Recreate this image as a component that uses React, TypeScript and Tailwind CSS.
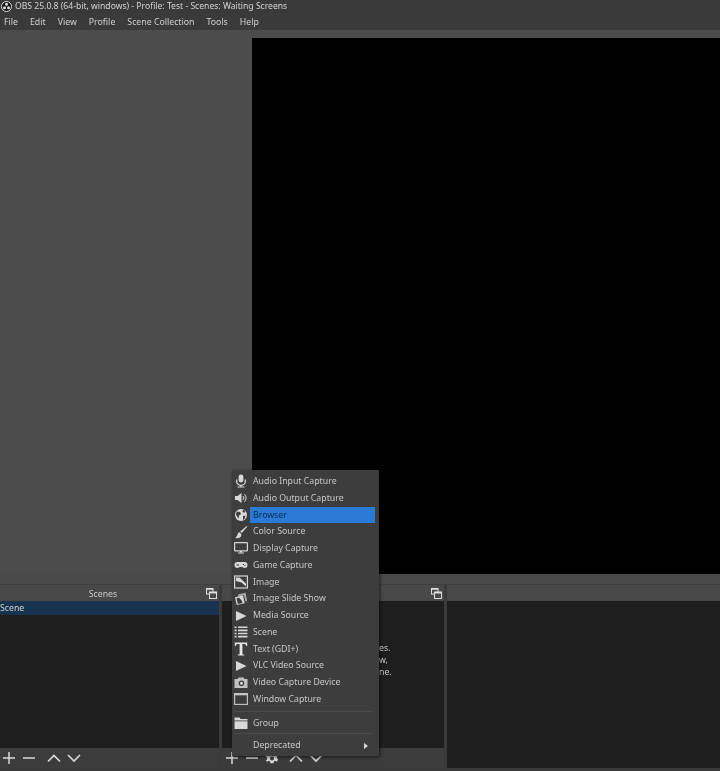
import type { ReactNode } from "react";

const font = "font-['Noto_Sans','Open_Sans',sans-serif]";

function Svg({ children }: { children: ReactNode }) {
  return (
    <svg width="14" height="14" viewBox="0 0 14 14" fill="#d8d8d8" stroke="none">
      {children}
    </svg>
  );
}

const MicIcon = () => (
  <Svg>
    <rect x="4.6" y="0.5" width="4.8" height="8" rx="2.4" />
    <path d="M2.6 5.5v1.5a4.4 4.4 0 0 0 8.8 0V5.5" fill="none" stroke="#d8d8d8" strokeWidth="1.3" />
    <path d="M6.3 11h1.4v1.4H10.500v1.100h-7v-1.100h2.800z" />
  </Svg>
);
const SpeakerIcon = () => (
  <Svg>
    <path d="M1 5h2.5L7.5 2v10L3.5 9H1z" />
    <path d="M9 5a3 3 0 0 1 0 4M10.5 3.2a5.5 5.5 0 0 1 0 7.6" fill="none" stroke="#d8d8d8" strokeWidth="1" />
  </Svg>
);
const GlobeIcon = () => (
  <Svg>
    <circle cx="7" cy="7" r="6" />
    <path d="M3 3.5l3 .5 1 2-2 1.500-.5 3L3 8.500 2 6zM9 1.800l2.500 1.500-1 1.500L8.500 4zM9 8l2.500-.5-1 3.500-1.500 1z" fill="#3d3d3d" />
  </Svg>
);
const BrushIcon = () => (
  <Svg>
    <path d="M13 .8 6.200 6.400 7.800 8 13.400 1.400z" />
    <path d="M5.400 7.200C3.500 7.500 3.800 10 2.800 11.200c-.6.700-1.400 1-1.800 1 1.400 1.200 4.200 1.400 5.600-.2.900-1 .9-2.800.3-3.400z" />
  </Svg>
);
const MonitorIcon = () => (
  <Svg>
    <rect x="0.6" y="1.6" width="12.8" height="8.3" rx="0.6" fill="none" stroke="#d8d8d8" strokeWidth="1.2" />
    <path d="M4 11.500h6v1H4z" />
    <path d="M6 10h2v1.500H6z" />
  </Svg>
);
const GamepadIcon = () => (
  <Svg>
    <path d="M3.500 4h7A3 3 0 0 1 13.500 7a3 3 0 0 1-3 3c-1.200 0-1.600-1-2.400-1H5.900c-.8 0-1.200 1-2.400 1a3 3 0 0 1-3-3 3 3 0 0 1 3-3z" />
    <path d="M2.500 6.500h2.500v1H2.500zM9 6h1v1H9zM10.500 7h1v1h-1z" fill="#3d3d3d" />
  </Svg>
);
const ImageIcon = () => (
  <Svg>
    <rect x="0.6" y="1" width="12.8" height="12" fill="none" stroke="#d8d8d8" strokeWidth="1.2" />
    <path d="M2 2.500h3.500l6.500 6v3L7.500 7.500 2 6z" />
  </Svg>
);
const SlidesIcon = () => (
  <Svg>
    <path d="M4 2.500 11.500.8l1.700 8.200-1.700.4L10 3.200 4.200 4.400z" opacity="0.7" />
    <path d="M1 5.200l8-1.600 1.700 7.600-8 1.800z" />
    <path d="M2.500 6.300l2.800-.5L8 9l.4 2-4.500 1z" fill="#3d3d3d" />
  </Svg>
);
const PlayIcon = () => (
  <Svg>
    <path d="M2 2l10.500 5L2 12z" />
  </Svg>
);
const ListIcon = () => (
  <Svg>
    <path d="M0.5 1.500h2v1.600h-2zM4 1.500h9.500v1.600H4zM0.5 4.600h2v1.600h-2zM4 4.600h9.500v1.600H4zM0.5 7.700h2v1.600h-2zM4 7.700h9.500v1.600H4zM0.5 10.800h2v1.600h-2zM4 10.800h9.500v1.600H4z" />
  </Svg>
);
const TextIcon = () => (
  <svg width="14" height="14" viewBox="0 0 14 14" fill="#e4e4e4">
    <path d="M0.8 0.5h12.400v3.400h-1C12 2.500 11.300 2 9.700 2H8.400v9.800c0 .6.500.8 1.700.8v1H3.900v-1c1.200 0 1.700-.2 1.700-.8V2H4.300C2.700 2 2 2.500 1.800 3.900h-1z" />
  </svg>
);
const CameraIcon = () => (
  <Svg>
    <path d="M0.5 3h3l1-1.500h5l1 1.500h3v9h-13z" opacity="0.85" />
    <circle cx="7.500" cy="7.200" r="2.800" fill="#3d3d3d" />
    <circle cx="7.500" cy="7.200" r="1.500" />
  </Svg>
);
const WindowIcon = () => (
  <Svg>
    <rect x="0.6" y="1.600" width="12.800" height="10.800" fill="none" stroke="#c8c8c8" strokeWidth="1.100" />
    <path d="M1 2h12v1.300H1z" fill="#c8c8c8" />
  </Svg>
);
const FolderIcon = () => (
  <Svg>
    <path d="M0.5 1.500h5l1 1.500h7v1.500h-13z" />
    <path d="M0.5 5.300h13v7.700h-13z" />
  </Svg>
);

const items: { label: string; icon: ReactNode; active?: boolean }[] = [
  { label: "Audio Input Capture", icon: <MicIcon /> },
  { label: "Audio Output Capture", icon: <SpeakerIcon /> },
  { label: "Browser", icon: <GlobeIcon />, active: true },
  { label: "Color Source", icon: <BrushIcon /> },
  { label: "Display Capture", icon: <MonitorIcon /> },
  { label: "Game Capture", icon: <GamepadIcon /> },
  { label: "Image", icon: <ImageIcon /> },
  { label: "Image Slide Show", icon: <SlidesIcon /> },
  { label: "Media Source", icon: <PlayIcon /> },
  { label: "Scene", icon: <ListIcon /> },
  { label: "Text (GDI+)", icon: <TextIcon /> },
  { label: "VLC Video Source", icon: <PlayIcon /> },
  { label: "Video Capture Device", icon: <CameraIcon /> },
  { label: "Window Capture", icon: <WindowIcon /> },
];

function MenuRow({ label, icon, active }: { label: string; icon: ReactNode; active?: boolean }) {
  return (
    <div className="flex h-[16.77px] items-center">
      <div className="flex w-[18px] shrink-0 justify-center">{icon}</div>
      <div className={`flex h-full flex-1 items-center pl-[3px] ${active ? "bg-[#2a7ad6] text-[#0b2c57]" : "text-[#c8c8c8]"}`}>
        {label}
      </div>
    </div>
  );
}

function SourceMenu() {
  return (
    <div className="absolute left-[232px] top-[470px] z-10 h-[286px] w-[147px] bg-[#3d3d3d] pr-[4px] pt-[3px] text-[8.75px] leading-none shadow-[1px_1px_3px_rgba(0,0,0,0.6)]">
      <div>
        {items.map((it) => (
          <MenuRow key={it.label} {...it} />
        ))}
      </div>
      <div className="mx-[2px] mt-[3px] h-px bg-[#4b4b4b]" />
      <div className="mt-[3px]">
        <MenuRow label="Group" icon={<FolderIcon />} />
      </div>
      <div className="mx-[2px] mt-[2px] h-px bg-[#4b4b4b]" />
      <div className="mt-[3px] flex h-[16.77px] items-center">
        <div className="w-[18px]" />
        <div className="flex flex-1 items-center justify-between pl-[3px] pr-[7px] text-[#c8c8c8]">
          Deprecated
          <span className="h-0 w-0 border-y-[3px] border-l-[4px] border-y-transparent border-l-[#d8d8d8]" />
        </div>
      </div>
    </div>
  );
}

const Plus = () => (
  <svg width="14" height="14" viewBox="0 0 14 14" stroke="#d8d8d8" strokeWidth="1.5" fill="none">
    <path d="M7 1v12M1 7h12" />
  </svg>
);
const Minus = () => (
  <svg width="14" height="14" viewBox="0 0 14 14" stroke="#d8d8d8" strokeWidth="1.5" fill="none">
    <path d="M1 7h12" />
  </svg>
);
const Up = () => (
  <svg width="14" height="14" viewBox="0 0 14 14" stroke="#d8d8d8" strokeWidth="1.7" fill="none">
    <path d="M1 10.500l6-6 6 6" />
  </svg>
);
const Down = () => (
  <svg width="14" height="14" viewBox="0 0 14 14" stroke="#d8d8d8" strokeWidth="1.7" fill="none">
    <path d="M1 4l6 6 6-6" />
  </svg>
);
const Gear = () => (
  <svg width="14" height="14" viewBox="0 0 14 14" fill="#d8d8d8">
    <path fillRule="evenodd" d="M5.500 1h3l.4 1.800 1.300.6 1.600-1 1.300 2.300-1.300 1.200v1.400l1.300 1.200-1.300 2.300-1.600-1-1.300.6-.4 1.800h-3l-.4-1.800-1.300-.6-1.600 1L.9 9.500l1.300-1.200V6.900L.9 5.700l1.300-2.300 1.600 1 1.300-.6zM7 5.400a2 2 0 1 0 0 4 2 2 0 0 0 0-4z" />
  </svg>
);
const Popout = () => (
  <svg width="11" height="11" viewBox="0 0 11 11" fill="none" stroke="#e0e0e0" strokeWidth="1">
    <rect x="0.5" y="0.5" width="6.500" height="5.500" fill="#4a4a4a" />
    <path d="M0.5 1h6.500" strokeWidth="1.5" />
    <rect x="3.500" y="4" width="7" height="6.500" fill="#4a4a4a" />
    <path d="M3.500 4.700h7" strokeWidth="1.5" />
  </svg>
);

function DockHeader({ title }: { title?: string }) {
  return (
    <div className="flex h-[16px] items-center bg-[#484848] pr-[2px] text-[8.75px] text-[#c8c8c8]">
      <div className="flex-1 pt-[3px] text-center leading-none">{title}</div>
      <Popout />
    </div>
  );
}

export default function App() {
  return (
    <div className={`${font} flex h-[771px] w-[720px] flex-col overflow-hidden bg-[#3a3a3a] blur-[0.35px]`}>
      <SourceMenu />
      {/* title bar */}
      <div className="flex h-[13px] items-center gap-[3px] bg-[#393939] text-[8.6px] leading-none text-[#d4d4d4]">
        <svg width="11" height="11" viewBox="0 0 11 11" className="ml-[1px]">
          <circle cx="5.5" cy="5.5" r="5" fill="#111" stroke="#ddd" strokeWidth="1" />
          <circle cx="5.5" cy="3.3" r="1.5" fill="#ddd" />
          <circle cx="3.5" cy="6.8" r="1.5" fill="#ddd" />
          <circle cx="7.5" cy="6.8" r="1.5" fill="#ddd" />
        </svg>
        <span>OBS 25.0.8 (64-bit, windows) - Profile: Test - Scenes: Waiting Screens</span>
      </div>
      {/* menu bar */}
      <div className="flex h-[17px] items-center gap-[12px] bg-[#3a3a3a] pl-[4px] pt-[1px] text-[8.75px] leading-none text-[#d0d0d0]">
        {["File", "Edit", "View", "Profile", "Scene Collection", "Tools", "Help"].map((m) => (
          <span key={m}>{m}</span>
        ))}
      </div>
      <div className="h-[8px] bg-[#4c4c4c]" />
      {/* preview */}
      <div className="flex h-[536px] bg-[#4c4c4c]">
        <div className="w-[252px]" />
        <div className="flex-1 bg-black" />
      </div>
      <div className="h-[11px] border-b border-[#3e3e3e] bg-[#4a4a4a]" />
      {/* docks */}
      <div className="flex flex-1 gap-[3px] bg-[#3a3a3a]">
        <div className="flex w-[219px] flex-col">
          <DockHeader title="Scenes" />
          <div className="h-[147px] bg-[#1e1e1e] text-[8.75px] text-[#d0d0d0]">
            <div className="flex h-[14px] items-center bg-[#17334f] leading-none">Scene</div>
          </div>
          <div className="flex h-[20px] items-center gap-[6px] bg-[#3c3c3c] pl-[2px]">
            <Plus />
            <Minus />
            <div className="ml-[5px]">
              <Up />
            </div>
            <Down />
          </div>
        </div>
        <div className="flex w-[222px] flex-col">
          <DockHeader />
          {/* only the line ends show past the open menu */}
          <div className="flex h-[147px] flex-col bg-[#1e1e1e] pt-[41px] text-[8.75px] leading-[12px] text-[#c8c8c8]">
            <span className="ml-[157px]">es.</span>
            <span className="ml-[157px]">w,</span>
            <span className="ml-[157px]">ne.</span>
          </div>
          <div className="flex h-[20px] items-center gap-[6px] bg-[#3c3c3c] pl-[3px]">
            <Plus />
            <Minus />
            <Gear />
            <div className="ml-[4px]">
              <Up />
            </div>
            <Down />
          </div>
        </div>
        <div className="flex flex-1 flex-col">
          <div className="h-[16px] bg-[#484848]" />
          <div className="h-[167px] bg-[#1e1e1e]" />
        </div>
      </div>
    </div>
  );
}
